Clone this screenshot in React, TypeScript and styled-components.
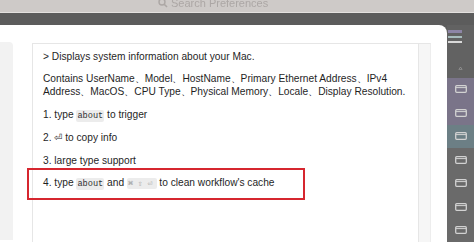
import React from 'react';
import styled, { createGlobalStyle } from 'styled-components';

const GlobalStyle = createGlobalStyle`
  html, body {
    margin: 0;
    padding: 0;
  }

  body {
    width: 474px;
    height: 242px;
    overflow: hidden;
    background: #5e5e5e;
    font-family: "Liberation Sans", Arial, sans-serif;
  }
`;

const Page = styled.div`
  display: flex;
  flex-direction: column;
  width: 474px;
  height: 242px;
  overflow: hidden;
`;

const TopBar = styled.div`
  display: flex;
  height: 12px;
  padding-left: 158px;
  background: #cecac8;
  border-bottom: 1px solid #e4e1df;
  overflow: hidden;
`;

const SearchHint = styled.div`
  display: flex;
  align-items: center;
  gap: 3px;
  margin-top: -6px;
  color: #aca7a5;
  font-size: 11px;
  line-height: 13px;
  filter: blur(0.7px);
`;

const Backdrop = styled.div`
  flex: 1;
  display: flex;
  min-height: 0;
  padding-top: 12px;
  background: #5c5c5c;
`;

const Dialog = styled.div`
  display: flex;
  width: 447px;
  flex-shrink: 0;
  padding-top: 17px;
  box-sizing: border-box;
  background: #ffffff;
  border-top-right-radius: 8px;
`;

const SidePanel = styled.div`
  width: 13px;
  margin-bottom: 2px;
  background: #f2f2f2;
  border-top-right-radius: 4px;
`;

const Content = styled.div`
  width: 387px;
  margin: 1px 0 0 19px;
  padding: 5.5px 6px 0 10px;
  box-sizing: border-box;
  border: 1px solid #e6e6e6;
  border-bottom: none;
  color: #1f1f1f;
`;

const ScrollTrack = styled.div`
  width: 11px;
  margin-top: 1px;
  background: #f6f6f6;
  border-top: 1px solid #e6e6e6;
  border-right: 1px solid #ededed;
`;

const Para = styled.p<{ lines?: number }>`
  position: relative;
  height: ${p => (p.lines || 1) * 13}px;
  margin: 0 0 9.75px;
  font-size: 10.2px;
  line-height: 13px;
`;

const Code = styled.code`
  padding: 1px;
  border-radius: 2px;
  background: #ececec;
  color: #333333;
  font-family: "Liberation Mono", "DejaVu Sans Mono", monospace;
  font-size: 8.6px;
  line-height: 1;
`;

const Keys = styled(Code)`
  padding: 1px 4px 1px 1px;
  color: #9c9c9c;
  font-size: 8.2px;
`;

const Annotation = styled.span`
  position: absolute;
  top: -8.5px;
  left: -16px;
  width: 278px;
  height: 32px;
  box-sizing: border-box;
  border: 2px solid #d6262f;
  pointer-events: none;
`;

const Strip = styled.div`
  flex: 1;
  display: flex;
  flex-direction: column;
  background: #626262;
`;

const Handle = styled.div`
  display: flex;
  flex-direction: column;
  gap: 3px;
  width: 14px;
  margin: 5px 0 0 1px;
`;

const HandleBar = styled.span<{ tone: string; h: number }>`
  height: ${p => p.h}px;
  background: ${p => p.tone};
`;

const Eject = styled.svg`
  display: block;
  margin: 24px 0 0 7px;
`;

const Rows = styled.div`
  margin-top: 7.5px;
`;

const StripRow = styled.div<{ tone: 'purple' | 'teal' | 'gray' }>`
  display: flex;
  align-items: center;
  justify-content: center;
  height: 23.5px;
  background: ${p =>
    p.tone === 'purple' ? '#7a7489' : p.tone === 'teal' ? '#6c7f85' : '#6a6a6a'};
`;

function WindowIcon() {
  return (
    <svg width="12" height="8" viewBox="0 0 12 8">
      <rect x="0.7" y="0.7" width="10.6" height="6.6" rx="1" fill="none" stroke="#d2d2d2" strokeWidth="1.3" />
      <line x1="1" y1="2.6" x2="11" y2="2.6" stroke="#d2d2d2" strokeWidth="1" />
    </svg>
  );
}

function SearchIcon() {
  return (
    <svg width="10" height="10" viewBox="0 0 10 10">
      <circle cx="4" cy="4" r="3" fill="none" stroke="#aca7a5" strokeWidth="1.4" />
      <line x1="6.2" y1="6.2" x2="9" y2="9" stroke="#aca7a5" strokeWidth="1.6" />
    </svg>
  );
}

const rowTones: ('purple' | 'teal' | 'gray')[] = ['purple', 'purple', 'teal', 'gray', 'gray', 'gray', 'gray'];

export default function App() {
  return (
    <Page>
      <GlobalStyle />
      <TopBar>
        <SearchHint>
          <SearchIcon />
          <span>Search Preferences</span>
        </SearchHint>
      </TopBar>
      <Backdrop>
        <Dialog>
          <SidePanel />
          <Content>
            <Para>&gt; Displays system information about your Mac.</Para>
            <Para lines={2}>
              Contains UserName、Model、HostName、Primary Ethernet Address、IPv4 Address、MacOS、CPU Type、Physical
              Memory、Locale、Display Resolution.
            </Para>
            <Para>
              1. type <Code>about</Code> to trigger
            </Para>
            <Para>2. ⏎ to copy info</Para>
            <Para>3. large type support</Para>
            <Para>
              4. type <Code>about</Code> and <Keys>⌘ ⇧ ⏎</Keys> to clean workflow's cache
              <Annotation />
            </Para>
          </Content>
          <ScrollTrack />
        </Dialog>
        <Strip>
          <Handle>
            <HandleBar tone="#8d85a6" h={3} />
            <HandleBar tone="#a8bdbd" h={2} />
            <HandleBar tone="#d9d9d9" h={2} />
          </Handle>
          <Eject width="13" height="7" viewBox="0 0 13 7">
            <polyline points="3,4 6.5,1 10,4" fill="none" stroke="#c9c9c9" strokeWidth="1.2" />
            <line x1="2" y1="6.3" x2="11" y2="6.3" stroke="#c9c9c9" strokeWidth="1" />
          </Eject>
          <Rows>
            {rowTones.map((tone, i) => (
              <StripRow key={i} tone={tone}>
                <WindowIcon />
              </StripRow>
            ))}
          </Rows>
        </Strip>
      </Backdrop>
    </Page>
  );
}
